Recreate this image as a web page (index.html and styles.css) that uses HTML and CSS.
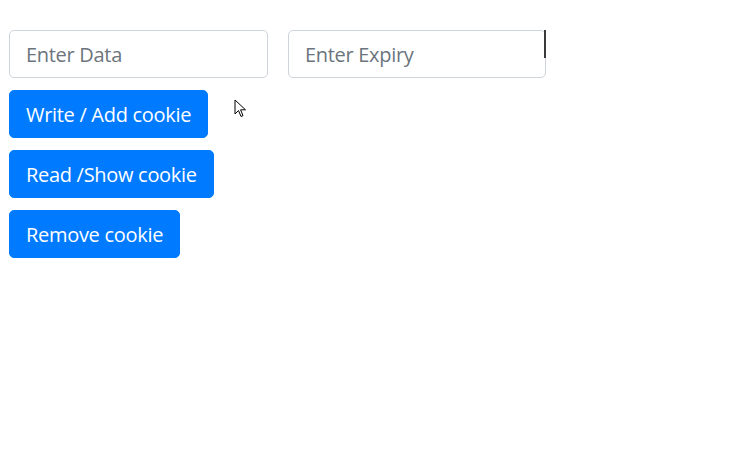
FILE: index.html
```html
<!DOCTYPE html>
<html>
<head>
<meta charset="utf-8">
<link rel="stylesheet" href="styles.css">
</head>
<body>
<div class="page">
  <div class="inputs">
    <input class="field" type="text" placeholder="Enter Data">
    <div class="field-wrap">
      <input class="field" type="text" placeholder="Enter Expiry">
      <span class="caret"></span>
    </div>
  </div>
  <div class="row">
    <button class="btn">Write / Add cookie</button>
    <svg class="pointer" width="14" height="20" viewBox="0 0 14 20"><path d="M1 1 L1 15 L4.5 11.5 L7 17.5 L9 16.6 L6.6 10.8 L11.5 10.8 Z" fill="#fff" stroke="#000" stroke-width="1" stroke-linejoin="round"/></svg>
  </div>
  <div class="row"><button class="btn">Read /Show cookie</button></div>
  <div class="row"><button class="btn">Remove cookie</button></div>
</div>
</body>
</html>
```
FILE: styles.css
```css
html, body {
  margin: 0;
  padding: 0;
  background: #fff;
}
body {
  font-family: "Open Sans", "Noto Sans", sans-serif;
}
.page {
  padding: 30px 9px;
  display: flex;
  flex-direction: column;
  gap: 12px;
}
.inputs {
  display: flex;
  gap: 20px;
}
.field-wrap {
  position: relative;
  display: flex;
}
.field {
  box-sizing: border-box;
  width: 259px;
  height: 48px;
  padding: 8px 16px;
  font-family: inherit;
  font-size: 20px;
  letter-spacing: -0.3px;
  color: #495057;
  border: 1px solid #ced4da;
  border-radius: 5px;
  outline: none;
  background: #fff;
}
.field-wrap .field {
  width: 258px;
}
.field::placeholder {
  color: #6c757d;
}
.caret {
  position: absolute;
  right: 0;
  top: 0;
  width: 2px;
  height: 28px;
  background: #3a3a3a;
}
.row {
  display: flex;
  align-items: flex-start;
  position: relative;
}
.btn {
  box-sizing: border-box;
  height: 48px;
  padding: 1px 16px 0;
  font-family: inherit;
  font-size: 20px;
  color: #fff;
  background: #007bff;
  border: 1px solid #007bff;
  border-radius: 5px;
  cursor: pointer;
  letter-spacing: -0.3px;
}
.pointer {
  position: absolute;
  left: 225px;
  top: 9px;
}
```
